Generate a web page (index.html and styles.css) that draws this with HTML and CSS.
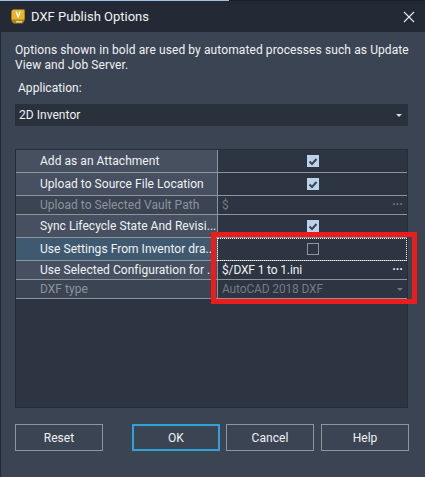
FILE: index.html
```html
<!DOCTYPE html>
<html lang="en">
<head>
<meta charset="utf-8">
<title>DXF Publish Options</title>
<link rel="stylesheet" href="styles.css">
</head>
<body>
<div class="topstrip"><div class="topstrip-light"></div></div>
<div class="dialog">
  <header class="titlebar">
    <svg class="logo" viewBox="0 0 16 16" width="16" height="16" aria-hidden="true">
      <path d="M2 1.500h12.500v10.500l-2 2.500H3.500L1.500 12z" fill="#a98516"/>
      <path d="M3 0.500h11.500v10H1.500V2z" fill="#e8b52a"/>
      <path d="M5.500 2.500h1.500l1.200 4 1.200-4h1.500L8.800 8.500H7.500z" fill="#fff"/>
      <rect x="6" y="12" width="6" height="1.500" fill="#e6d9a8"/>
    </svg>
    <span class="title">DXF Publish Options</span>
    <svg class="close" viewBox="0 0 12 12" width="12" height="12" aria-hidden="true">
      <path d="M1 1l10 10M11 1L1 11" stroke="#e8eaed" stroke-width="1.100" fill="none"/>
    </svg>
  </header>
  <main class="content">
    <p class="intro">Options shown in bold are used by automated processes such as Update View and Job Server.</p>
    <label class="app-label">Application:</label>
    <div class="select">
      <span>2D Inventor</span>
      <span class="arrow"></span>
    </div>
    <div class="panel">
      <div class="grid">
        <div class="name tall">Add as an Attachment</div>
        <div class="val tall center"><span class="check on"><svg viewBox="0 0 12 12" width="12" height="12"><path d="M2.500 6.500l2.500 2.500 4.500-5" stroke="#3b4453" stroke-width="2" fill="none"/></svg></span></div>

        <div class="name tall">Upload to Source File Location</div>
        <div class="val tall center"><span class="check on"><svg viewBox="0 0 12 12" width="12" height="12"><path d="M2.500 6.500l2.500 2.500 4.500-5" stroke="#3b4453" stroke-width="2" fill="none"/></svg></span></div>

        <div class="name short disabled">Upload to Selected Vault Path</div>
        <div class="val short text disabled"><span>$</span><span class="dots">···</span></div>

        <div class="name tall">Sync Lifecycle State And Revisi...</div>
        <div class="val tall center"><span class="check on"><svg viewBox="0 0 12 12" width="12" height="12"><path d="M2.500 6.500l2.500 2.500 4.500-5" stroke="#3b4453" stroke-width="2" fill="none"/></svg></span></div>

        <div class="name tall selected">Use Settings From Inventor dra...</div>
        <div class="val tall center focused"><span class="check off"></span></div>

        <div class="name short">Use Selected Configuration for ...</div>
        <div class="val short text"><span>$/DXF 1 to 1.ini</span><span class="dots">···</span></div>

        <div class="name short disabled">DXF type</div>
        <div class="val short text disabled"><span>AutoCAD 2018 DXF</span><span class="arrow dim"></span></div>
      </div>
      <div class="callout"></div>
    </div>
    <div class="buttons">
      <button class="btn reset">Reset</button>
      <button class="btn default">OK</button>
      <button class="btn">Cancel</button>
      <button class="btn help">Help</button>
    </div>
  </main>
</div>
</body>
</html>
```
FILE: styles.css
```css
* { box-sizing: border-box; }
html, body { margin: 0; padding: 0; }
body {
  width: 425px;
  height: 477px;
  overflow: hidden;
  background: #3b4453;
  font-family: "Roboto", "Noto Sans", sans-serif;
  font-size: 12px;
  letter-spacing: 0.04px;
  color: #f0f2f4;
}
.topstrip { height: 1px; background: #1b2129; }
.topstrip-light { width: 229px; height: 1px; background: #9fc0e0; }
.dialog {
  height: 476px;
  display: flex;
  flex-direction: column;
  border-left: 1px solid #232a35;
}
.titlebar {
  height: 31px;
  flex: none;
  display: flex;
  align-items: center;
  background: #232a35;
  padding: 0 8px 0 9px;
}
.logo { flex: none; margin-right: 5px; }
.title { font-size: 13px; flex: 1; letter-spacing: 0; }
.close { flex: none; margin-right: 2px; }
.content { flex: 1; padding: 11px 16px 0 14px; }
.intro { margin: 0; line-height: 15px; width: 394px; letter-spacing: 0.1px; }
.app-label { display: block; margin: 7px 0 0 3px; line-height: 16px; }
.select {
  margin-top: 8px;
  height: 22px;
  width: 393px;
  background: #29313c;
  display: flex;
  align-items: center;
  justify-content: space-between;
  padding: 0 6px 0 4px;
}
.arrow {
  width: 0;
  height: 0;
  border-left: 3px solid transparent;
  border-right: 3px solid transparent;
  border-top: 3px solid #d8dce2;
}
.arrow.dim { border-top-color: #6f7783; }
.panel {
  position: relative;
  margin-top: 23px;
  width: 393px;
  height: 259px;
  background: #2d3542;
  border: 1px solid #262d38;
}
.grid {
  display: grid;
  grid-template-columns: 201px 190px;
  grid-auto-rows: min-content;
}
.name, .val {
  display: flex;
  align-items: center;
  border-bottom: 1px solid #8f949b;
  white-space: nowrap;
}
.tall { height: 23px; }
.short { height: 19px; }
.name { background: #465060; padding-left: 24px; }
.name.disabled { background: #3b4453; color: #8d939c; }
.name.selected { background: #3f5a70; }
.val { border-left: 1px solid #8f949b; }
.center { justify-content: center; }
.text { justify-content: space-between; padding: 0 4px; letter-spacing: -0.15px; }
.val.disabled { color: #737a85; }
.dots { font-weight: 700; letter-spacing: 0; line-height: 1; }
.check {
  width: 12px;
  height: 12px;
  display: block;
}
.check svg { display: block; }
.check.on { background: #bdd3ea; }
.check.off { border: 1px solid #8d97a3; }
.focused { outline: 1px dotted #ffffff; outline-offset: -1px; }
.callout {
  position: absolute;
  left: 195px;
  top: 82px;
  width: 206px;
  height: 72px;
  border: 5px solid #ea1c1c;
  pointer-events: none;
}
.buttons { display: flex; margin-top: 16px; gap: 6px; }
.btn {
  width: 88px;
  height: 27px;
  background: transparent;
  border: 1px solid #8f949b;
  color: #f0f2f4;
  font: inherit;
  letter-spacing: inherit;
  padding: 0;
}
.btn.reset { margin-right: 23px; }
.btn.help { margin-left: 1px; }
.btn.default { border: 2px solid #2ea3d8; }
```
